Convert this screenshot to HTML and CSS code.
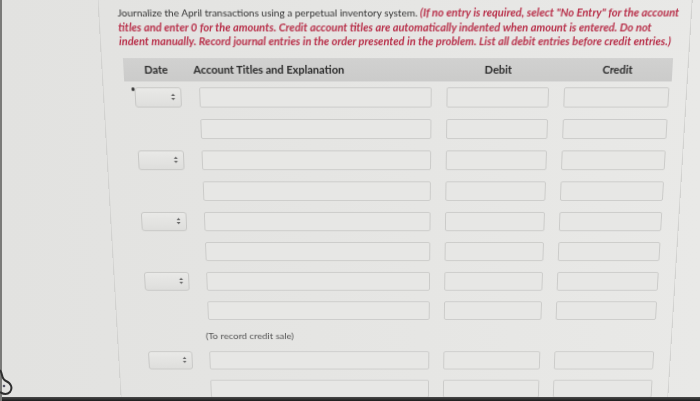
FILE: index.html
```html
<!DOCTYPE html>
<html>
<head>
    <title>Journal Entry Worksheet</title>
    <link rel="stylesheet" href="styles.css">
</head>
<body>
<div id="frame">
  <div id="page">
    <div class="card">
      <p class="instructions">Journalize the April transactions using a perpetual inventory system. <em>(If no entry is required, select "No Entry" for the account<br>titles and enter 0 for the amounts. Credit account titles are automatically indented when amount is entered. Do not<br>indent manually. Record journal entries in the order presented in the problem. List all debit entries before credit entries.)</em></p>

      <div class="journal">
        <div class="journal-head">
          <div class="col-date">Date</div>
          <div class="col-account">Account Titles and Explanation</div>
          <div class="col-debit">Debit</div>
          <div class="col-credit">Credit</div>
        </div>

        <div class="journal-rows">
          <div class="cell-date"><span class="marker"></span><div class="date-select"><svg width="5" height="8" viewBox="0 0 5 8"><path d="M2.5 0.5 L4.5 3 L0.5 3 Z M2.5 7.5 L4.5 5 L0.5 5 Z" fill="#666"/></svg></div></div>
          <div class="box"></div><div class="box"></div><div class="box"></div>

          <div class="cell-date"></div>
          <div class="box"></div><div class="box"></div><div class="box"></div>

          <div class="cell-date"><div class="date-select"><svg width="5" height="8" viewBox="0 0 5 8"><path d="M2.5 0.5 L4.5 3 L0.5 3 Z M2.5 7.5 L4.5 5 L0.5 5 Z" fill="#666"/></svg></div></div>
          <div class="box"></div><div class="box"></div><div class="box"></div>

          <div class="cell-date"></div>
          <div class="box"></div><div class="box"></div><div class="box"></div>

          <div class="cell-date"><div class="date-select"><svg width="5" height="8" viewBox="0 0 5 8"><path d="M2.5 0.5 L4.5 3 L0.5 3 Z M2.5 7.5 L4.5 5 L0.5 5 Z" fill="#666"/></svg></div></div>
          <div class="box"></div><div class="box"></div><div class="box"></div>

          <div class="cell-date"></div>
          <div class="box"></div><div class="box"></div><div class="box"></div>

          <div class="cell-date"><div class="date-select"><svg width="5" height="8" viewBox="0 0 5 8"><path d="M2.5 0.5 L4.5 3 L0.5 3 Z M2.5 7.5 L4.5 5 L0.5 5 Z" fill="#666"/></svg></div></div>
          <div class="box"></div><div class="box"></div><div class="box"></div>

          <div class="cell-date"></div>
          <div class="box"></div><div class="box"></div><div class="box"></div>

          <div class="cell-date"></div>
          <div class="note">(To record credit sale)</div>

          <div class="cell-date"><div class="date-select"><svg width="5" height="8" viewBox="0 0 5 8"><path d="M2.5 0.5 L4.5 3 L0.5 3 Z M2.5 7.5 L4.5 5 L0.5 5 Z" fill="#666"/></svg></div></div>
          <div class="box"></div><div class="box"></div><div class="box"></div>

          <div class="cell-date"></div>
          <div class="box"></div><div class="box"></div><div class="box"></div>
        </div>
      </div>
    </div>
  </div>
  <div id="bezel"></div>
  <svg class="dock-icon" width="16" height="28" viewBox="0 0 16 28">
    <path d="M0 1 C3 5, 1 10, 6 12 C11 14, 13 19, 10 23 C7 26, 3 25, 0 23" fill="none" stroke="#2e2e2e" stroke-width="2"/>
    <circle cx="4" cy="17" r="1.3" fill="#556"/>
  </svg>
</div>
</body>
</html>
```

FILE: styles.css
```css
html, body {
  height: 100%;
  margin: 0;
  overflow: hidden;
}
body {
  background: #e4e4e2;
  font-family: Lato, "Open Sans", sans-serif;
  color: #333;
}

#frame {
  position: relative;
  height: 100%;
  display: flex;
  flex-direction: column;
  border-left: 2px solid #7a7a78;
  box-sizing: border-box;
}
#page {
  flex: 1;
  overflow: hidden;
  background: linear-gradient(90deg, #e2e2e0 0%, #e6e6e4 60%, #e9e9e7 100%);
}
#bezel {
  height: 4px;
  background: linear-gradient(#4a4a4a, #1c1c1c);
}
.dock-icon {
  position: absolute;
  left: -2px;
  bottom: 4px;
}

/* the photo was taken at an angle: tilt the sheet away */
.card {
  margin-left: 99px;
  width: 586px;
  height: 520px;
  border-left: 1px solid #d2d2d0;
  border-right: 1px solid #d2d2d0;
  transform-origin: 286px 60px;
  transform: perspective(1000px) rotateX(-11.5deg);
}

.instructions {
  margin: 0;
  padding: 5px 0 0 18px;
  font-size: 10px;
  line-height: 14.5px;
  white-space: nowrap;
  color: #333;
}
.instructions em {
  color: #b8304a;
  font-weight: bold;
  font-size: 11px;
}

.journal {
  margin: 9px 0 0 21px;
  width: 550px;
}
.journal-head, .journal-rows {
  display: grid;
  grid-template-columns: 60px 234px 103px 106px;
  column-gap: 15px;
}
.journal-head {
  height: 24px;
  align-items: center;
  background: linear-gradient(#d1d1d0, #cbcbca);
  font-size: 11px;
  font-weight: bold;
  color: #2a2a2a;
}
.col-date, .col-debit, .col-credit {
  text-align: center;
}
.col-date {
  padding-left: 5px;
}
.col-account {
  margin-left: -5px;
}

.journal-rows {
  margin-top: 6px;
  grid-template-rows: repeat(8, 21px) 12px repeat(2, 21px);
  row-gap: 12px;
}
.journal-rows > .note {
  grid-column: 2 / span 3;
  line-height: 12px;
  font-size: 10px;
  color: #555;
  margin-left: -3px;
}
.cell-date {
  position: relative;
}
.date-select {
  margin-left: 10px;
  width: 47px;
  height: 21px;
  box-sizing: border-box;
  border: 1px solid #c7c7c5;
  border-radius: 3px;
  background: linear-gradient(#e9e9e7, #dededc);
  display: flex;
  justify-content: flex-end;
  align-items: center;
  padding-right: 5px;
}
.marker {
  position: absolute;
  left: 7px;
  top: 0;
  width: 3px;
  height: 4px;
  border-radius: 50%;
  background: #333;
}
.box {
  box-sizing: border-box;
  border: 1px solid #cbcbc9;
  border-radius: 2px;
  background: #e7e7e5;
}
```
